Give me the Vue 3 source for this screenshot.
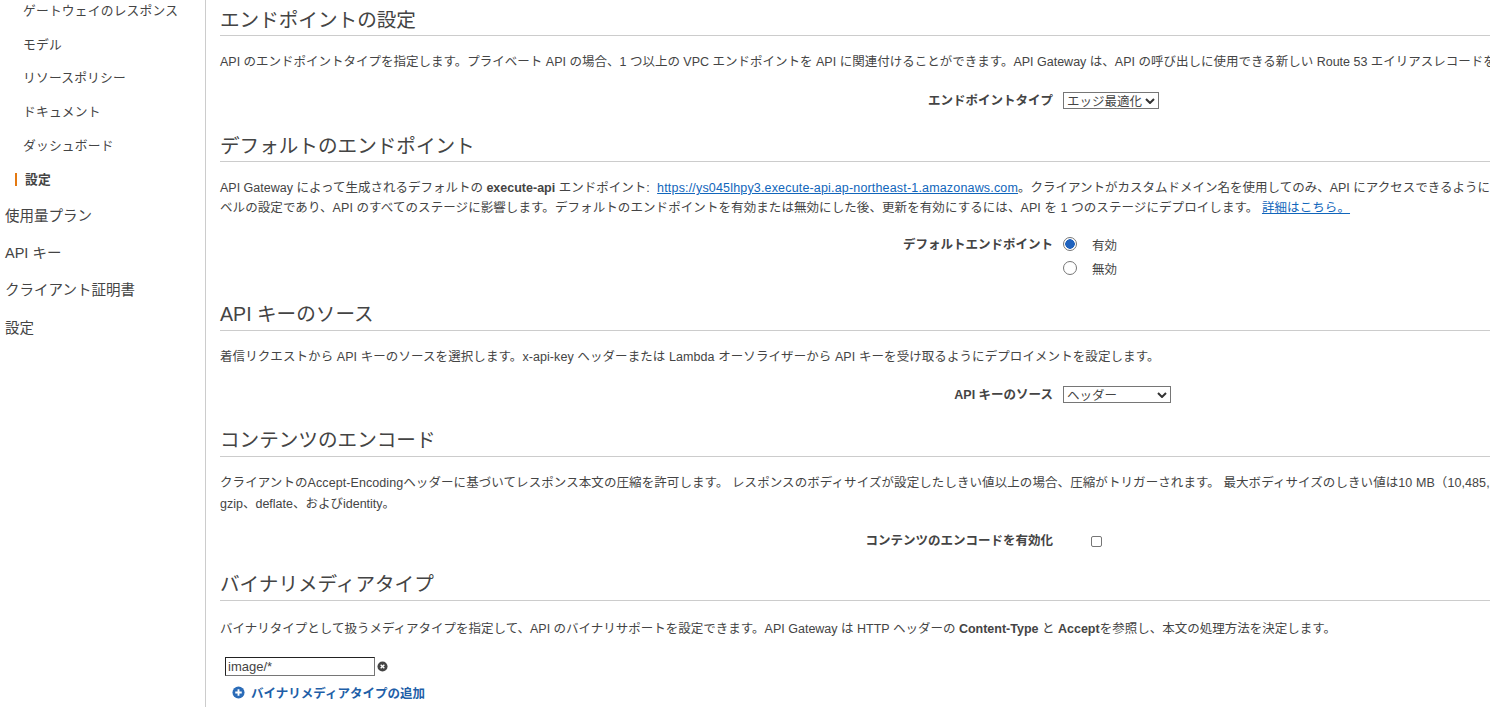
<script setup>
const subItems = ['ゲートウェイのレスポンス', 'モデル', 'リソースポリシー', 'ドキュメント', 'ダッシュボード'];
const topItems = ['使用量プラン', 'API キー', 'クライアント証明書', '設定'];
</script>

<template>
  <div class="page">
    <aside class="sidebar">
      <ul class="sub-nav">
        <li v-for="item in subItems" :key="item">{{ item }}</li>
        <li class="active">設定</li>
      </ul>
      <ul class="top-nav">
        <li v-for="item in topItems" :key="item">{{ item }}</li>
      </ul>
    </aside>

    <main class="content">
      <section class="sec-endpoint">
        <h2>エンドポイントの設定</h2>
        <p>API のエンドポイントタイプを指定します。プライベート API の場合、1 つ以上の VPC エンドポイントを API に関連付けることができます。API Gateway は、API の呼び出しに使用できる新しい Route 53 エイリアスレコードを</p>
        <div class="row">
          <label>エンドポイントタイプ</label>
          <div class="fake-select sel-edge"><span>エッジ最適化</span><svg viewBox="0 0 10 6"><path d="M1 1l4 4 4-4" /></svg></div>
        </div>
      </section>

      <section class="sec-default">
        <h2>デフォルトのエンドポイント</h2>
        <p>API Gateway によって生成されるデフォルトの <b>execute-api</b> エンドポイント: <a class="url">https://ys045lhpy3.execute-api.ap-northeast-1.amazonaws.com</a>。クライアントがカスタムドメイン名を使用してのみ、API にアクセスできるように</p>
        <p class="loose">ベルの設定であり、API のすべてのステージに影響します。デフォルトのエンドポイントを有効または無効にした後、更新を有効にするには、API を 1 つのステージにデプロイします。 <a>詳細はこちら。</a></p>
        <div class="row radios">
          <label>デフォルトエンドポイント</label>
          <div class="radio-list">
            <div class="radio-item"><span class="radio on"></span>有効</div>
            <div class="radio-item"><span class="radio"></span>無効</div>
          </div>
        </div>
      </section>

      <section class="sec-key">
        <h2>API キーのソース</h2>
        <p class="loose">着信リクエストから API キーのソースを選択します。x-api-key ヘッダーまたは Lambda オーソライザーから API キーを受け取るようにデプロイメントを設定します。</p>
        <div class="row">
          <label>API キーのソース</label>
          <div class="fake-select sel-key"><span>ヘッダー</span><svg viewBox="0 0 10 6"><path d="M1 1l4 4 4-4" /></svg></div>
        </div>
      </section>

      <section class="sec-encode">
        <h2>コンテンツのエンコード</h2>
        <p class="loose">クライアントのAccept-Encodingヘッダーに基づいてレスポンス本文の圧縮を許可します。 レスポンスのボディサイズが設定したしきい値以上の場合、圧縮がトリガーされます。 最大ボディサイズのしきい値は10 MB（10,485,</p>
        <p class="second">gzip、deflate、およびidentity。</p>
        <div class="row check-row">
          <label>コンテンツのエンコードを有効化</label>
          <span class="checkbox"></span>
        </div>
      </section>

      <section class="sec-binary">
        <h2>バイナリメディアタイプ</h2>
        <p>バイナリタイプとして扱うメディアタイプを指定して、API のバイナリサポートを設定できます。API Gateway は HTTP ヘッダーの <b>Content-Type</b> と <b>Accept</b>を参照し、本文の処理方法を決定します。</p>
        <div class="media-row">
          <div class="media-input">image/*</div>
          <svg class="remove" viewBox="0 0 12 12">
            <circle cx="6" cy="6" r="5.5" fill="#444" />
            <path d="M4 4l4 4M8 4l-4 4" stroke="#fff" stroke-width="1.5" />
          </svg>
        </div>
        <div class="add-row">
          <svg viewBox="0 0 14 14">
            <circle cx="7" cy="7" r="6.5" fill="#2b6cb8" />
            <path d="M3.5 7h7M7 3.5v7" stroke="#fff" stroke-width="2" />
          </svg>
          <span>バイナリメディアタイプの追加</span>
        </div>
      </section>
    </main>
  </div>
</template>

<style scoped>
.page {
  display: flex;
  height: 707px;
  overflow: hidden;
  background: #fff;
  color: #444;
  font-family: "Liberation Sans", "Noto Sans CJK JP", sans-serif;
  font-size: 12.5px;
}

.sidebar {
  flex: 0 0 205px;
  border-right: 1px solid #ccc;
}

ul {
  list-style: none;
  margin: 0;
  padding: 0;
}

.sub-nav {
  margin-top: -6px;
}

.sub-nav li {
  height: 33.7px;
  line-height: 33.7px;
  padding-left: 23px;
  font-size: 12.75px;
  letter-spacing: 0.2px;
}

.sub-nav li.active {
  position: relative;
  margin-top: 1px;
  padding-left: 25px;
  font-weight: bold;
}

.sub-nav li.active::before {
  content: "";
  position: absolute;
  left: 15px;
  top: 10px;
  width: 2px;
  height: 13px;
  background: #e47911;
}

.top-nav {
  margin-top: 0.5px;
}

.top-nav li {
  height: 37.4px;
  line-height: 37.4px;
  padding-left: 5px;
  font-size: 14.5px;
}

.content {
  flex: 1;
  min-width: 0;
  padding-left: 14px;
  overflow: hidden;
}

section {
  display: flow-root;
}

h2 {
  margin: 0;
  height: 28px;
  line-height: 26px;
  border-bottom: 1px solid #ccc;
  font-size: 19.6px;
  font-weight: normal;
  color: #444;
}

p {
  margin: 0;
  height: 20px;
  line-height: 20px;
  white-space: nowrap;
}

p.loose {
  letter-spacing: 0.08px;
}

a {
  color: #1166bb;
  text-decoration: underline;
}

.url {
  margin-left: 4px;
  letter-spacing: 0.17px;
}

b {
  font-weight: bold;
}

.sec-endpoint { margin-top: 7px; }
.sec-endpoint p { margin-top: 16px; }
.sec-endpoint .row { margin-top: 20px; }

.sec-default { margin-top: 23px; }
.sec-default h2 + p { margin-top: 16px; }
.sec-default .row { margin-top: 18px; }

.sec-key { margin-top: 24px; }
.sec-key h2 { height: 29px; }
.sec-key p { margin-top: 16px; }
.sec-key .row { margin-top: 19px; }

.sec-encode { margin-top: 23px; }
.sec-encode h2 { height: 29px; }
.sec-encode h2 + p { margin-top: 16px; }
.sec-encode p.second { margin-top: 1px; }
.sec-encode .row { margin-top: 18px; }

.sec-binary { margin-top: 21px; }
.sec-binary h2 { height: 29px; }
.sec-binary p { margin-top: 18px; }

.row {
  display: flex;
  align-items: flex-start;
  gap: 10px;
}

.row label {
  flex: 0 0 833px;
  text-align: right;
  font-weight: bold;
  line-height: 18px;
}

.fake-select {
  display: flex;
  align-items: center;
  justify-content: space-between;
  box-sizing: border-box;
  height: 17px;
  padding: 0 3px;
  border: 1px solid #767676;
  color: #444;
  white-space: nowrap;
}

.sel-edge { width: 96px; }
.sel-key { width: 108px; }

.fake-select svg {
  width: 10px;
  height: 6px;
  flex: none;
  fill: none;
  stroke: #333;
  stroke-width: 2;
}

.radio-list {
  display: flex;
  flex-direction: column;
  gap: 6px;
  margin-top: -1px;
}

.radio-item {
  display: flex;
  align-items: center;
  height: 18px;
}

.radio {
  box-sizing: border-box;
  width: 14px;
  height: 14px;
  margin-right: 15px;
  border: 1px solid #767676;
  border-radius: 50%;
  background: #fff;
}

.radio.on {
  border-color: #767676;
  background: radial-gradient(circle, #1f62bd 0 4.5px, #fff 5px);
}

.check-row {
  align-items: center;
}

.checkbox {
  box-sizing: border-box;
  width: 11px;
  height: 11px;
  margin-left: 28px;
  border: 1px solid #767676;
  border-radius: 2px;
}

.media-row {
  display: flex;
  align-items: center;
  margin-top: 18px;
  padding-left: 5px;
}

.media-input {
  box-sizing: border-box;
  width: 150px;
  height: 19px;
  line-height: 17px;
  padding-left: 2px;
  border: 1px solid #767676;
  border-top-color: #222;
  border-left-color: #222;
  font-size: 13px;
}

.remove {
  width: 11px;
  height: 11px;
  margin-left: 2px;
}

.add-row {
  display: flex;
  align-items: center;
  gap: 6px;
  margin-top: 7px;
  padding-left: 12px;
  color: #1f5fa8;
  font-weight: bold;
}

.add-row svg {
  width: 13px;
  height: 13px;
}
</style>
